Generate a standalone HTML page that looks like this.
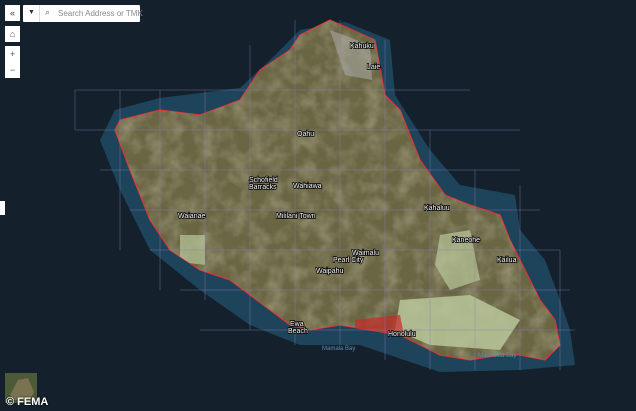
<!DOCTYPE html>
<html><head><style>
html,body{margin:0;padding:0;width:636px;height:411px;overflow:hidden;background:#14212c;font-family:"Liberation Sans",sans-serif}
.btn{position:absolute;background:#fff;box-sizing:border-box}
.lbl{font:7px "Liberation Sans",sans-serif;fill:#fff;stroke:#000;stroke-width:1.5px;paint-order:stroke}
</style></head><body>
<svg width="636" height="411" style="position:absolute;left:0;top:0">
<defs>
<filter id="n"><feTurbulence type="fractalNoise" baseFrequency="0.06" numOctaves="3" seed="4"/><feColorMatrix values="0 0 0 0 0.32  0 0 0 0 0.3  0 0 0 0 0.18  0 0 0 1.6 -0.6"/></filter>
</defs>
<rect width="636" height="411" fill="#14212c"/>
<path d="M300 30 L345 22 L390 40 L395 95 L430 150 L460 185 L515 195 L520 230 L545 260 L560 300 L570 330 L575 365 L520 370 L440 372 L360 345 L300 345 L250 325 L200 290 L150 250 L120 190 L100 140 L115 110 L160 98 L240 88 L270 60 Z" fill="#1f4860" opacity="0.9"/>
<path id="isl" d="M330 20 L375 40 L385 95 L400 110 L420 160 L445 195 L470 205 L500 215 L510 240 L520 260 L540 300 L555 320 L560 345 L545 360 L520 355 L500 355 L470 360 L440 355 L420 345 L400 335 L370 330 L340 325 L310 330 L290 325 L270 310 L230 280 L200 270 L170 250 L150 220 L130 170 L115 130 L120 120 L160 110 L200 115 L240 100 L260 70 L290 50 L300 35 Z" fill="#6a6644" stroke="#d33" stroke-width="1.2"/>
<clipPath id="c"><use href="#isl"/></clipPath>
<g clip-path="url(#c)">
<rect width="636" height="411" filter="url(#n)"/>
<path d="M400 300 L470 295 L520 320 L500 350 L430 345 L395 330 Z" fill="#b9c79a" opacity="0.85"/>
<path d="M440 235 L470 230 L480 280 L450 290 L435 265 Z" fill="#b9c79a" opacity="0.7"/>
<path d="M180 235 L205 235 L205 265 L180 262 Z" fill="#b9c79a" opacity="0.7"/>
<path d="M330 30 L370 45 L372 80 L345 75 Z" fill="#a8a6a0" opacity="0.6"/>
<path d="M355 320 L400 315 L405 340 L355 335 Z" fill="#c62a2a" opacity="0.7"/>
</g>
<g stroke="#8a7fb5" stroke-width="0.5" fill="none" opacity="0.75">
<path d="M75 90 H470 M75 130 H520 M100 170 H520 M130 210 H540 M150 250 H560 M180 290 H570 M200 330 H575 M75 90 V130 M120 90 V250 M160 90 V290 M205 90 V300 M250 45 V330 M295 20 V345 M340 20 V345 M385 40 V360 M430 130 V370 M475 170 V370 M520 185 V370 M560 250 V370"/>
</g>
<g class="lbl">
<text x="350" y="48" class="lbl">Kahuku</text>
<text x="367" y="69" class="lbl">Laie</text>
<text x="297" y="136" class="lbl">Oahu</text>
<text x="249" y="182" class="lbl">Schofield</text>
<text x="249" y="189" class="lbl">Barracks</text>
<text x="293" y="188" class="lbl">Wahiawa</text>
<text x="276" y="218" class="lbl">Mililani Town</text>
<text x="178" y="218" class="lbl">Waianae</text>
<text x="424" y="210" class="lbl">Kahaluu</text>
<text x="452" y="242" class="lbl">Kaneohe</text>
<text x="497" y="262" class="lbl">Kailua</text>
<text x="352" y="255" class="lbl">Waimalu</text>
<text x="333" y="262" class="lbl">Pearl City</text>
<text x="316" y="273" class="lbl">Waipahu</text>
<text x="290" y="326" class="lbl">Ewa</text>
<text x="288" y="333" class="lbl">Beach</text>
<text x="388" y="336" class="lbl">Honolulu</text>
</g>
<text x="322" y="350" font-size="6" fill="#5a8fb0">Mamala Bay</text>
<text x="478" y="357" font-size="6" fill="#5a8fb0">Maunalua Bay</text>
<rect x="5" y="373" width="32" height="30" fill="#4d5a3a"/>
<path d="M10 395 L18 380 L28 378 L34 392 L30 400 L14 400 Z" fill="#7a7250"/>
</svg>
<div class="btn" style="left:5px;top:5px;width:15px;height:16px;font-size:9px;text-align:center;line-height:16px;color:#444">«</div>
<div class="btn" style="left:23px;top:5px;width:117px;height:17px;border-radius:1px">
<span style="position:absolute;left:5px;top:4px;font-size:7px;color:#333">▼</span>
<span style="position:absolute;left:16px;top:0;width:1px;height:17px;background:#ddd"></span>
<span style="position:absolute;left:22px;top:2px;font-size:9px;color:#666">⌕</span>
<span style="position:absolute;left:35px;top:4px;font-size:8px;color:#888;white-space:nowrap">Search Address or TMK</span></div>
<div class="btn" style="left:5px;top:26px;width:15px;height:16px;font-size:9px;text-align:center;line-height:16px;color:#555">⌂</div>
<div class="btn" style="left:5px;top:46px;width:15px;height:32px;font-size:9px;text-align:center;line-height:16px;color:#555">+<br>−</div>
<div class="btn" style="left:0;top:201px;width:5px;height:14px"></div>
<div style="position:absolute;left:6px;top:396px;color:#fff;font-weight:bold;font-size:11px;text-shadow:0 0 2px #000">© FEMA</div>
</body></html>
